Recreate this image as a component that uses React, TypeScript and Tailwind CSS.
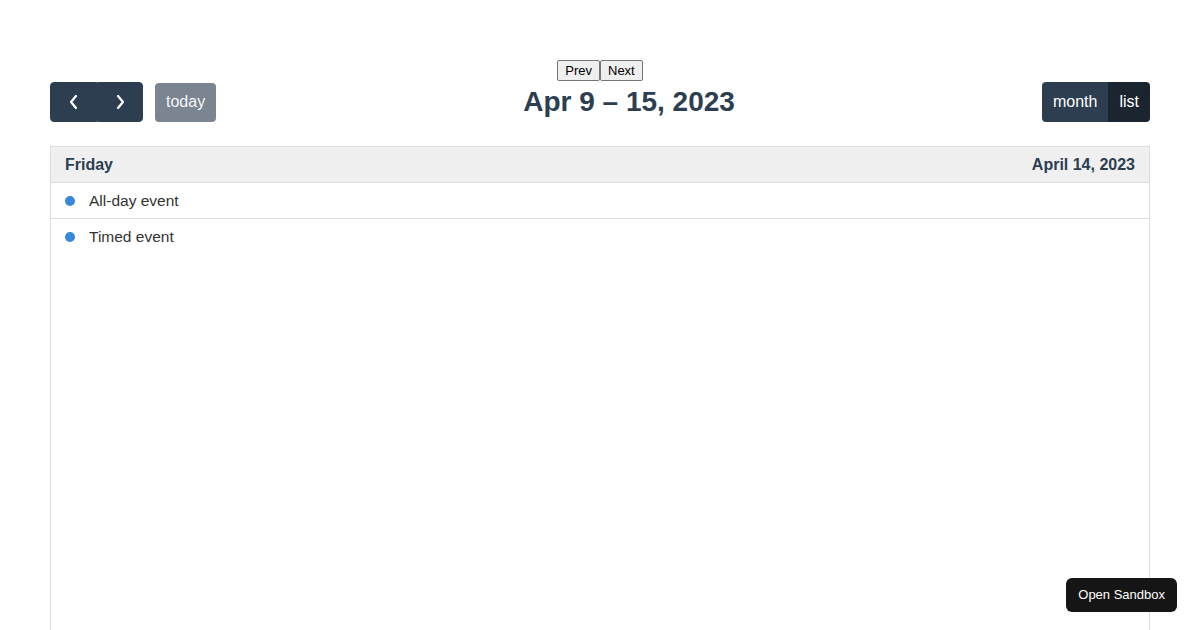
import React from 'react';

const font = { fontFamily: '"Liberation Sans", Arial, sans-serif' };

function Chevron({ dir }: { dir: 'left' | 'right' }) {
  return (
    <svg width="12" height="16" viewBox="0 0 12 16" fill="none" stroke="white" strokeWidth="2.2" strokeLinecap="round" strokeLinejoin="round">
      {dir === 'left' ? <polyline points="8,2 3,8 8,14" /> : <polyline points="4,2 9,8 4,14" />}
    </svg>
  );
}

export default function App() {
  return (
    <div className="min-h-screen bg-white pt-[60px] px-[50px] text-[16px]" style={font}>
      {/* test buttons */}
      <div className="flex justify-center leading-none">
        <button className="h-[21px] px-[7px] border border-[#767676] rounded-[2px] bg-[#efefef] text-[13px] text-black">Prev</button>
        <button className="h-[21px] px-[7px] border border-[#767676] rounded-[2px] bg-[#efefef] text-[13px] text-black">Next</button>
      </div>

      {/* Toolbar */}
      <div className="flex items-center justify-between mt-px mb-6">
        <div className="flex items-center">
          <div className="flex">
            <button className="w-[47px] h-10 flex items-center justify-center bg-[#2c3e50] rounded-l-[4px] border border-[#2c3e50]">
              <Chevron dir="left" />
            </button>
            <button className="w-[46px] h-10 flex items-center justify-center bg-[#2c3e50] rounded-r-[4px] border border-[#2c3e50]">
              <Chevron dir="right" />
            </button>
          </div>
          <button className="ml-3 h-[39px] px-[11px] bg-[#7b8591] text-white/95 rounded-[4px]">today</button>
        </div>
        <h2 className="text-[28px] font-bold text-[#2c3e50] leading-none">Apr 9 – 15, 2023</h2>
        <div className="flex">
          <button className="h-10 px-[11px] bg-[#2c3e50] text-white rounded-l-[4px]">month</button>
          <button className="h-10 px-[11px] bg-[#1a252f] text-white rounded-r-[4px]">list</button>
        </div>
      </div>

      {/* List */}
      <div className="border border-[#ddd] h-[520px]">
        <div className="flex justify-between items-center h-9 px-[14px] bg-[#f0f0f0] border-b border-[#ddd] font-bold text-[#2c3e50]">
          <span>Friday</span>
          <span>April 14, 2023</span>
        </div>
        <div className="flex items-center h-[36px] px-[14px] border-b border-[#ddd] text-[#333] text-[15.5px]">
          <span className="w-[10px] h-[10px] rounded-full bg-[#3788d8]" />
          <span className="ml-[14px]">All-day event</span>
        </div>
        <div className="flex items-center h-[35px] px-[14px] text-[#333] text-[15.5px]">
          <span className="w-[10px] h-[10px] rounded-full bg-[#3788d8]" />
          <span className="ml-[14px]">Timed event</span>
        </div>
      </div>

      <button className="fixed right-[23px] bottom-[18px] h-[34px] px-[12px] bg-[#151515] text-white text-[13px] rounded-[6px]">
        Open Sandbox
      </button>
    </div>
  );
}
